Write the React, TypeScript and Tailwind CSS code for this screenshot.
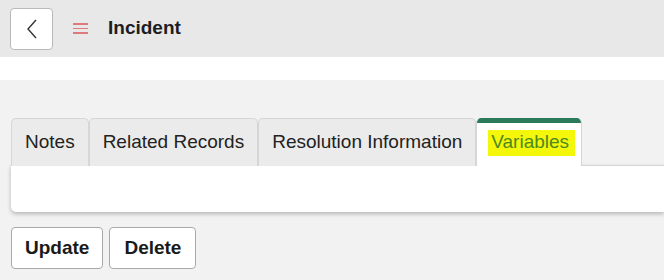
import React from 'react';

const tabs = ['Notes', 'Related Records', 'Resolution Information'];

export default function App() {
  return (
    <div className="w-[664px] h-[280px] overflow-hidden bg-[#f2f2f2] font-['Liberation_Sans',Arial,sans-serif] text-[#222]">
      {/* header */}
      <div className="h-[57px] bg-[#e8e8e8] flex items-center pl-[10px]">
        <button className="w-[43px] h-[42px] bg-white border border-[#b9b9b9] rounded-[4px] flex items-center justify-center">
          <svg width="14" height="22" viewBox="0 0 14 22" fill="none">
            <path d="M11 2 L3 11 L11 20" stroke="#333" strokeWidth="1.4" />
          </svg>
        </button>
        <div className="ml-[20px] flex flex-col gap-[3px]">
          <div className="w-[15px] h-[1.5px] bg-[#e07a7a]" />
          <div className="w-[15px] h-[1.5px] bg-[#e07a7a]" />
          <div className="w-[15px] h-[1.5px] bg-[#e07a7a]" />
        </div>
        <h1 className="ml-[20px] text-[19px] font-bold text-[#1d1d24] mt-[-1px]">Incident</h1>
      </div>
      <div className="h-[23px] bg-white" />

      {/* tabs */}
      <div className="pl-[11px] pt-[38px]">
        <div className="flex items-end h-[48px]">
          {tabs.map((t) => (
            <div
              key={t}
              className="h-[48px] px-[13px] flex items-center bg-[#ebebeb] border border-b-0 border-[#d6d6d6] rounded-t-[5px] text-[19px] text-[#222]"
            >
              {t}
            </div>
          ))}
          <div className="h-[48px] w-[106px] bg-white border-x border-[#d6d6d6] rounded-t-[5px] overflow-hidden flex flex-col relative z-10">
            <div className="h-[5px] bg-[#2b7a5a]" />
            <div className="flex-1 flex items-center pl-[11px] pb-[3px]">
              <span className="bg-[#f4f70a] text-[19px] text-[#4c8a1e] pl-[3px] pr-[6px] pt-[1px] pb-[3px] leading-[22px]">Variables</span>
            </div>
          </div>
        </div>
        <div className="h-[47px] bg-white border-t border-[#d6d6d6] rounded-bl-[5px] shadow-[0_2px_4px_rgba(0,0,0,0.25)] -mt-[1px]" />
      </div>

      {/* actions */}
      <div className="pl-[11px] pt-[15px] flex gap-[6px]">
        <button className="h-[42px] px-[13px] bg-white border border-[#a9a9a9] rounded-[4px] text-[19px] font-bold text-[#1a1a1a]">
          Update
        </button>
        <button className="h-[42px] px-[14px] bg-white border border-[#a9a9a9] rounded-[4px] text-[19px] font-bold text-[#1a1a1a]">
          Delete
        </button>
      </div>
    </div>
  );
}
